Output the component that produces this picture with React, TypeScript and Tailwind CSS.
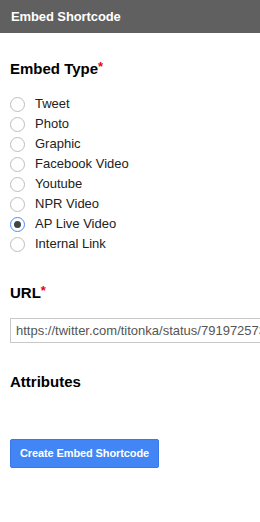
import React, { useState } from 'react';

const options = [
  'Tweet',
  'Photo',
  'Graphic',
  'Facebook Video',
  'Youtube',
  'NPR Video',
  'AP Live Video',
  'Internal Link'
];

const App: React.FC = () => {
  const [selected, setSelected] = useState('AP Live Video');

  return (
    <div className="w-[260px] h-[522px] bg-white overflow-hidden" style={{ fontFamily: '"Liberation Sans", Arial, sans-serif' }}>
      {/* Header */}
      <div className="h-[33px] bg-[#606060] flex items-center px-[11px]">
        <span className="text-white font-bold text-[13px] tracking-[-0.1px]">Embed Shortcode</span>
      </div>

      <div className="pl-[10px]">
        {/* Embed Type */}
        <h2 className="mt-[27px] text-[15px] font-bold leading-[18px] text-black">
          Embed Type<span className="text-red-600 align-top text-[13px] leading-none">*</span>
        </h2>
        <div className="mt-[16px] flex flex-col">
          {options.map(opt => (
            <label key={opt} className="h-[20px] flex items-center cursor-pointer">
              <span
                className={`w-[15px] h-[15px] rounded-full border bg-white flex items-center justify-center ${
                  selected === opt ? 'border-[#4a8cf7]' : 'border-[#bdbdbd]'
                }`}
                onClick={() => setSelected(opt)}
              >
                {selected === opt && <span className="w-[7px] h-[7px] rounded-full bg-[#444]" />}
              </span>
              <span className="ml-[10px] text-[13px] text-[#222]">{opt}</span>
            </label>
          ))}
        </div>

        {/* URL */}
        <h2 className="mt-[30px] text-[15px] font-bold leading-[18px] text-black">
          URL<span className="text-red-600 align-top text-[13px] leading-none">*</span>
        </h2>
        <div className="mt-[16px] w-[260px] h-[25px] border border-[#c8c8c8] border-r-0 flex items-center pl-[5px] overflow-hidden whitespace-nowrap">
          <span className="text-[13px] text-[#555]">https://twitter.com/titonka/status/791972573</span>
        </div>

        {/* Attributes */}
        <h2 className="mt-[30px] text-[15px] font-bold leading-[18px] text-black">Attributes</h2>

        <button
          type="button"
          className="mt-[48px] w-[149px] h-[29px] bg-[#4285f4] border border-[#3b78e7] rounded-[2px] text-white text-[11px] font-bold tracking-[-0.1px]"
        >
          Create Embed Shortcode
        </button>
      </div>
    </div>
  );
};

export default App;
